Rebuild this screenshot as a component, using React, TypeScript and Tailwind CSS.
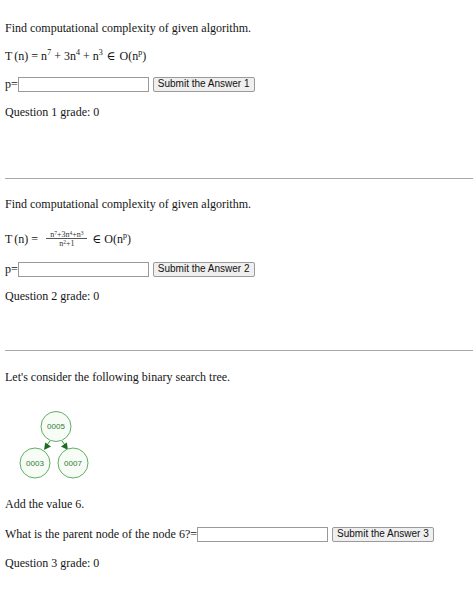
import React from "react";

const Sup = ({ children }: { children: React.ReactNode }) => (
  <span className="relative -top-[5px] text-[8px] leading-none">{children}</span>
);

const SmallSup = ({ children }: { children: React.ReactNode }) => (
  <span className="relative -top-[2px] text-[5.5px] leading-none">{children}</span>
);

const AnswerRow = ({ label, n, cls }: { label: string; n: number; cls: string }) => (
  <div className={`flex h-[16px] items-center ${cls}`}>
    <span>{label}</span>
    <input
      type="text"
      className="h-[15px] w-[131px] border border-[#9a9a9a] bg-white outline-none"
    />
    <button className="ml-[4px] h-[15px] rounded-[2px] border border-[#9a9a9a] bg-[#efefef] px-[4px] font-['Liberation_Sans',Arial,sans-serif] text-[10px] leading-none text-[#111]">
      Submit the Answer {n}
    </button>
  </div>
);

const Tree = () => (
  <svg width="100" height="90" viewBox="0 0 100 90" className="mt-[16px] block">
    <g stroke="#3d8f40" strokeWidth="1">
      <line x1="45" y1="41" x2="40.5" y2="47" />
      <line x1="57" y1="41" x2="61.5" y2="47" />
    </g>
    <polygon points="39,50 46,46.5 40.2,42.4" fill="#1e6b22" />
    <polygon points="63,50 56,46.5 61.8,42.4" fill="#1e6b22" />
    {[
      { x: 51, y: 26.5, t: "0005" },
      { x: 30, y: 63, t: "0003" },
      { x: 68, y: 63, t: "0007" },
    ].map((c) => (
      <g key={c.t}>
        <circle cx={c.x} cy={c.y} r="15" fill="#f7fcf7" stroke="#5fae62" strokeWidth="1" />
        <text
          x={c.x}
          y={c.y + 2.8}
          textAnchor="middle"
          fontSize="8"
          fontFamily="'Liberation Sans', Arial, sans-serif"
          fill="#2e7d32"
        >
          {c.t}
        </text>
      </g>
    ))}
  </svg>
);

export default function App() {
  return (
    <div className="min-h-screen bg-white pl-[5px] pr-[1px] font-['Liberation_Serif','DejaVu_Serif',serif] text-[12px] leading-[14px] text-[#151515]">
      <p className="mt-[21px]">Find computational complexity of given algorithm.</p>
      <p className="mt-[14px] whitespace-nowrap">
        T<span className="ml-[2px]">(n)</span> = n<Sup>7</Sup> + 3n<Sup>4</Sup> + n<Sup>3</Sup>{" "}
        <span className="mx-[1px]">∈</span> O(n<Sup>p</Sup>)
      </p>
      <AnswerRow label="p=" n={1} cls="mt-[13px]" />
      <p className="mt-[13px]">Question 1 grade: 0</p>
      <hr className="mt-[59px] border-t border-[#a8a8a8]" />

      <p className="mt-[18px]">Find computational complexity of given algorithm.</p>
      <div className="mt-[20px] flex h-[16px] items-center whitespace-nowrap">
        <span>
          T<span className="ml-[2px]">(n)</span> =
        </span>
        <span className="ml-[8px] inline-flex flex-col items-center text-[#333]">
          <span className="border-b border-[#555] px-[4px] text-[8px] leading-[7px]">
            n<SmallSup>7</SmallSup>+3n<SmallSup>4</SmallSup>+n<SmallSup>3</SmallSup>
          </span>
          <span className="pt-[1px] text-[8px] leading-[7px]">
            n<SmallSup>2</SmallSup>+1
          </span>
        </span>
        <span className="ml-[5px]">
          ∈ O(n<Sup>p</Sup>)
        </span>
      </div>
      <AnswerRow label="p=" n={2} cls="mt-[14px]" />
      <p className="mt-[12px]">Question 2 grade: 0</p>
      <hr className="mt-[47px] border-t border-[#a8a8a8]" />

      <p className="mt-[19px]">Let's consider the following binary search tree.</p>
      <Tree />
      <p className="mt-[7px]">Add the value 6.</p>
      <AnswerRow label="What is the parent node of the node 6?=" n={3} cls="mt-[15px]" />
      <p className="mt-[14px]">Question 3 grade: 0</p>
    </div>
  );
}
